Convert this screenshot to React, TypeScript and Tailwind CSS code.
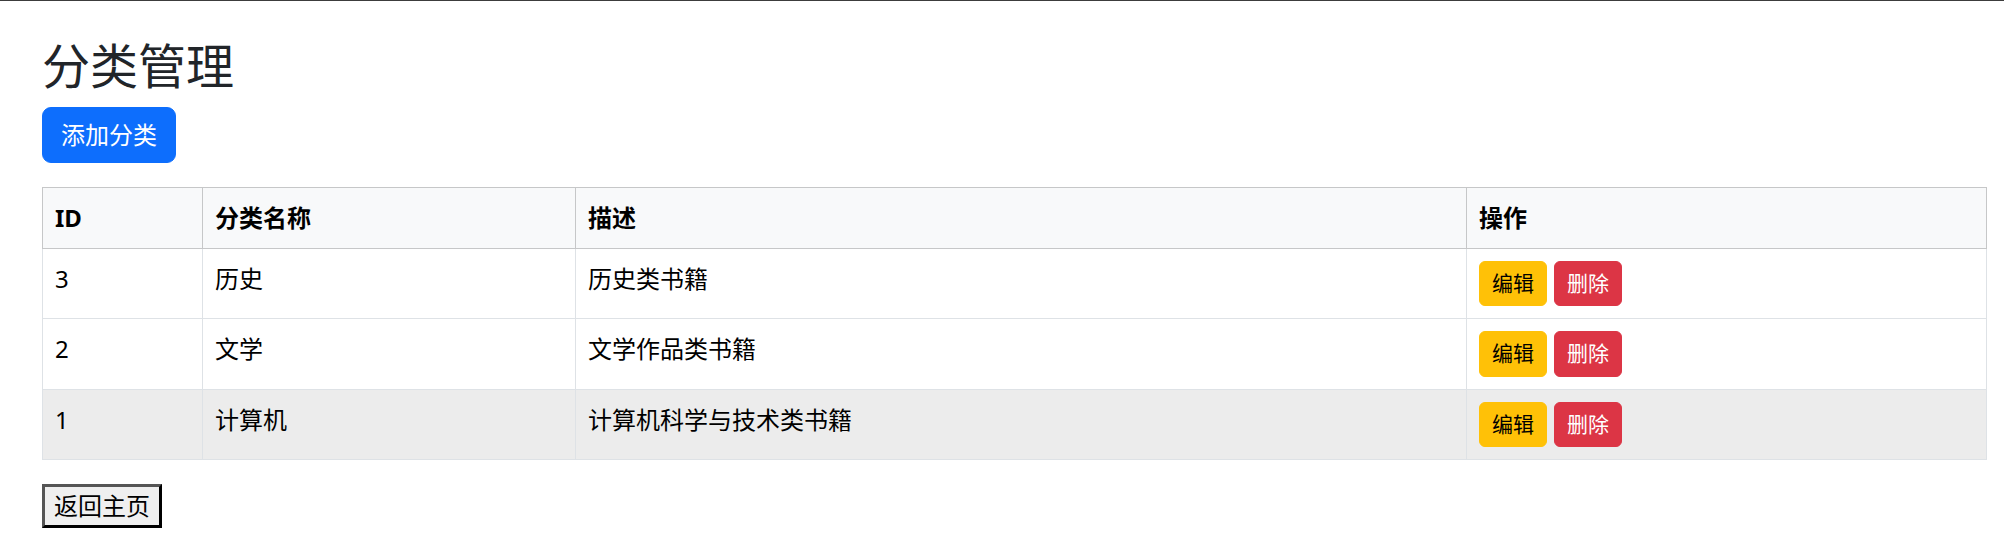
import React from "react";

const rows = [
  { id: "3", name: "历史", desc: "历史类书籍", hover: false },
  { id: "2", name: "文学", desc: "文学作品类书籍", hover: false },
  { id: "1", name: "计算机", desc: "计算机科学与技术类书籍", hover: true },
];

const font = {
  fontFamily: '"Noto Sans", "Noto Sans CJK SC", sans-serif',
};

export default function App() {
  return (
    <div className="min-h-[549px] bg-white text-[#212529]" style={font}>
      <div className="h-px bg-[#3c3c3c]" />
      <div className="pl-[42px] pr-[18px] pt-[36px]">
        <h1 className="text-[48px] leading-[57.6px] font-normal mb-[12px] text-[#212529]">
          分类管理
        </h1>
        <button className="bg-[#0d6efd] text-white text-[24px] leading-[36px] px-[18px] py-[9px] border border-[#0d6efd] rounded-[9px]">
          添加分类
        </button>
        <table className="w-full table-fixed border-collapse mt-[24px] text-[24px] leading-[36px] align-top">
          <colgroup>
            <col className="w-[160px]" />
            <col className="w-[373px]" />
            <col className="w-[891px]" />
            <col className="w-[520px]" />
          </colgroup>
          <thead>
            <tr className="bg-[#f8f9fa]">
              {["ID", "分类名称", "描述", "操作"].map((h) => (
                <th
                  key={h}
                  className="border border-[#c6c7c8] p-[12px] text-left font-bold text-black align-top"
                >
                  {h}
                </th>
              ))}
            </tr>
          </thead>
          <tbody>
            {rows.map((r) => (
              <tr key={r.id} className={r.hover ? "bg-[#ececec]" : "bg-white"}>
                <td className="border border-[#dee2e6] p-[12px] align-top text-black">{r.id}</td>
                <td className="border border-[#dee2e6] p-[12px] align-top text-black">{r.name}</td>
                <td className="border border-[#dee2e6] p-[12px] align-top text-black">{r.desc}</td>
                <td className="border border-[#dee2e6] p-[12px] align-top">
                  <div className="flex gap-[7px]">
                    <button className="bg-[#ffc107] border border-[#ffc107] text-black text-[21px] leading-[31.5px] px-[12px] py-[6px] rounded-[6px]">
                      编辑
                    </button>
                    <button className="bg-[#dc3545] border border-[#dc3545] text-white text-[21px] leading-[31.5px] px-[12px] py-[6px] rounded-[6px]">
                      删除
                    </button>
                  </div>
                </td>
              </tr>
            ))}
          </tbody>
        </table>
        <button className="mt-[24px] bg-[#efefef] text-black text-[24px] leading-[32px] px-[9px] py-[3px] border-[3px] border-t-[#555555] border-l-[#555555] border-r-black border-b-black">
          返回主页
        </button>
      </div>
    </div>
  );
}
